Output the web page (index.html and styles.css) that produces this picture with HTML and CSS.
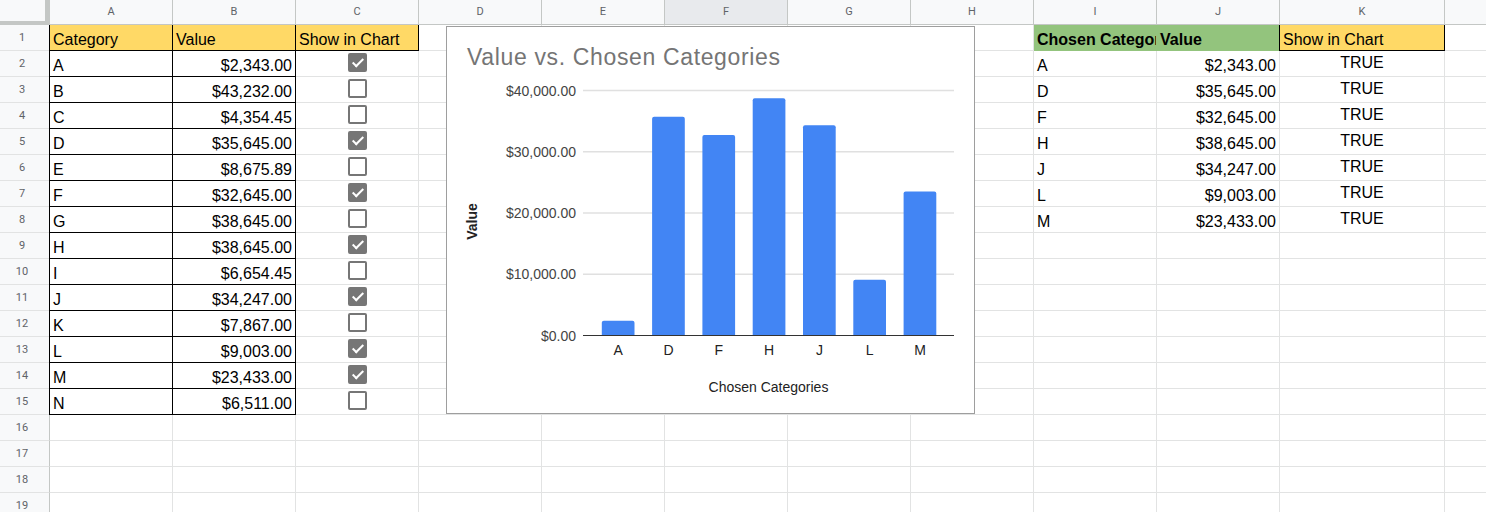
FILE: index.html
```html
<!DOCTYPE html>
<html lang="en">
<head>
    <meta charset="UTF-8">
    <title>Chosen Categories Chart</title>
    <link rel="stylesheet" href="styles.css">
</head>
<body>
    <div class="sheet">
        <div class="corner"></div>
        <div class="col">A</div><div class="col">B</div><div class="col">C</div><div class="col">D</div><div class="col">E</div><div class="col sel">F</div><div class="col">G</div><div class="col">H</div><div class="col">I</div><div class="col">J</div><div class="col">K</div><div class="col"></div>

        <div class="num">1</div>
        <div class="c yel bk bl">Category</div><div class="c yel bk">Value</div><div class="c yel bk">Show in Chart</div>
        <div class="c"></div><div class="c"></div><div class="c"></div><div class="c"></div><div class="c"></div>
        <div class="c grn b">Chosen Categories</div><div class="c grn b">Value</div><div class="c yel bk bl">Show in Chart</div><div class="c"></div>

        <div class="num">2</div>
        <div class="c bk bl">A</div><div class="c bk r">$2,343.00</div><div class="c ctr"><span class="cb on"></span></div>
        <div class="c"></div><div class="c"></div><div class="c"></div><div class="c"></div><div class="c"></div>
        <div class="c">A</div><div class="c r">$2,343.00</div><div class="c ctr t">TRUE</div><div class="c"></div>

        <div class="num">3</div>
        <div class="c bk bl">B</div><div class="c bk r">$43,232.00</div><div class="c ctr"><span class="cb"></span></div>
        <div class="c"></div><div class="c"></div><div class="c"></div><div class="c"></div><div class="c"></div>
        <div class="c">D</div><div class="c r">$35,645.00</div><div class="c ctr t">TRUE</div><div class="c"></div>

        <div class="num">4</div>
        <div class="c bk bl">C</div><div class="c bk r">$4,354.45</div><div class="c ctr"><span class="cb"></span></div>
        <div class="c"></div><div class="c"></div><div class="c"></div><div class="c"></div><div class="c"></div>
        <div class="c">F</div><div class="c r">$32,645.00</div><div class="c ctr t">TRUE</div><div class="c"></div>

        <div class="num">5</div>
        <div class="c bk bl">D</div><div class="c bk r">$35,645.00</div><div class="c ctr"><span class="cb on"></span></div>
        <div class="c"></div><div class="c"></div><div class="c"></div><div class="c"></div><div class="c"></div>
        <div class="c">H</div><div class="c r">$38,645.00</div><div class="c ctr t">TRUE</div><div class="c"></div>

        <div class="num">6</div>
        <div class="c bk bl">E</div><div class="c bk r">$8,675.89</div><div class="c ctr"><span class="cb"></span></div>
        <div class="c"></div><div class="c"></div><div class="c"></div><div class="c"></div><div class="c"></div>
        <div class="c">J</div><div class="c r">$34,247.00</div><div class="c ctr t">TRUE</div><div class="c"></div>

        <div class="num">7</div>
        <div class="c bk bl">F</div><div class="c bk r">$32,645.00</div><div class="c ctr"><span class="cb on"></span></div>
        <div class="c"></div><div class="c"></div><div class="c"></div><div class="c"></div><div class="c"></div>
        <div class="c">L</div><div class="c r">$9,003.00</div><div class="c ctr t">TRUE</div><div class="c"></div>

        <div class="num">8</div>
        <div class="c bk bl">G</div><div class="c bk r">$38,645.00</div><div class="c ctr"><span class="cb"></span></div>
        <div class="c"></div><div class="c"></div><div class="c"></div><div class="c"></div><div class="c"></div>
        <div class="c">M</div><div class="c r">$23,433.00</div><div class="c ctr t">TRUE</div><div class="c"></div>

        <div class="num">9</div>
        <div class="c bk bl">H</div><div class="c bk r">$38,645.00</div><div class="c ctr"><span class="cb on"></span></div>
        <div class="c"></div><div class="c"></div><div class="c"></div><div class="c"></div><div class="c"></div>
        <div class="c"></div><div class="c"></div><div class="c"></div><div class="c"></div>

        <div class="num">10</div>
        <div class="c bk bl">I</div><div class="c bk r">$6,654.45</div><div class="c ctr"><span class="cb"></span></div>
        <div class="c"></div><div class="c"></div><div class="c"></div><div class="c"></div><div class="c"></div>
        <div class="c"></div><div class="c"></div><div class="c"></div><div class="c"></div>

        <div class="num">11</div>
        <div class="c bk bl">J</div><div class="c bk r">$34,247.00</div><div class="c ctr"><span class="cb on"></span></div>
        <div class="c"></div><div class="c"></div><div class="c"></div><div class="c"></div><div class="c"></div>
        <div class="c"></div><div class="c"></div><div class="c"></div><div class="c"></div>

        <div class="num">12</div>
        <div class="c bk bl">K</div><div class="c bk r">$7,867.00</div><div class="c ctr"><span class="cb"></span></div>
        <div class="c"></div><div class="c"></div><div class="c"></div><div class="c"></div><div class="c"></div>
        <div class="c"></div><div class="c"></div><div class="c"></div><div class="c"></div>

        <div class="num">13</div>
        <div class="c bk bl">L</div><div class="c bk r">$9,003.00</div><div class="c ctr"><span class="cb on"></span></div>
        <div class="c"></div><div class="c"></div><div class="c"></div><div class="c"></div><div class="c"></div>
        <div class="c"></div><div class="c"></div><div class="c"></div><div class="c"></div>

        <div class="num">14</div>
        <div class="c bk bl">M</div><div class="c bk r">$23,433.00</div><div class="c ctr"><span class="cb on"></span></div>
        <div class="c"></div><div class="c"></div><div class="c"></div><div class="c"></div><div class="c"></div>
        <div class="c"></div><div class="c"></div><div class="c"></div><div class="c"></div>

        <div class="num">15</div>
        <div class="c bk bl">N</div><div class="c bk r">$6,511.00</div><div class="c ctr"><span class="cb"></span></div>
        <div class="c"></div><div class="c"></div><div class="c"></div><div class="c"></div><div class="c"></div>
        <div class="c"></div><div class="c"></div><div class="c"></div><div class="c"></div>

        <div class="num">16</div>
        <div class="c"></div><div class="c"></div><div class="c"></div><div class="c"></div><div class="c"></div><div class="c"></div>
        <div class="c"></div><div class="c"></div><div class="c"></div><div class="c"></div><div class="c"></div><div class="c"></div>

        <div class="num">17</div>
        <div class="c"></div><div class="c"></div><div class="c"></div><div class="c"></div><div class="c"></div><div class="c"></div>
        <div class="c"></div><div class="c"></div><div class="c"></div><div class="c"></div><div class="c"></div><div class="c"></div>

        <div class="num">18</div>
        <div class="c"></div><div class="c"></div><div class="c"></div><div class="c"></div><div class="c"></div><div class="c"></div>
        <div class="c"></div><div class="c"></div><div class="c"></div><div class="c"></div><div class="c"></div><div class="c"></div>

        <div class="num">19</div>
        <div class="c"></div><div class="c"></div><div class="c"></div><div class="c"></div><div class="c"></div><div class="c"></div>
        <div class="c"></div><div class="c"></div><div class="c"></div><div class="c"></div><div class="c"></div><div class="c"></div>

        <!-- floating chart over D1:H15 -->
        <div class="chart">
            <svg width="527" height="386" viewBox="447 27 527 386">
                <text class="title" x="467" y="65" textLength="313">Value vs. Chosen Categories</text>

                <g class="grid">
                    <line x1="583" y1="90.5" x2="954" y2="90.5"/>
                    <line x1="583" y1="151.75" x2="954" y2="151.75"/>
                    <line x1="583" y1="213" x2="954" y2="213"/>
                    <line x1="583" y1="274.25" x2="954" y2="274.25"/>
                </g>

                <g class="ylab">
                    <text x="576" y="95.5">$40,000.00</text>
                    <text x="576" y="156.75">$30,000.00</text>
                    <text x="576" y="218">$20,000.00</text>
                    <text x="576" y="279.25">$10,000.00</text>
                    <text x="576" y="340.5">$0.00</text>
                </g>

                <g class="bars">
                    <path d="M601.8 335.5V322.65Q601.8 320.65 603.8 320.65H632.5Q634.5 320.65 634.5 322.65V335.5Z"/>
                    <path d="M652.1 335.5V118.7Q652.1 116.7 654.1 116.7H682.8Q684.8 116.7 684.8 118.7V335.5Z"/>
                    <path d="M702.4 335.5V137.05Q702.4 135.05 704.4 135.05H733.1Q735.1 135.05 735.1 137.05V335.5Z"/>
                    <path d="M752.7 335.5V100.3Q752.7 98.3 754.7 98.3H783.4Q785.4 98.3 785.4 100.3V335.5Z"/>
                    <path d="M803 335.5V127.24Q803 125.24 805 125.24H833.7Q835.7 125.24 835.7 127.24V335.5Z"/>
                    <path d="M853.3 335.5V281.86Q853.3 279.86 855.3 279.86H884Q886 279.86 886 281.86V335.5Z"/>
                    <path d="M903.6 335.5V193.47Q903.6 191.47 905.6 191.47H934.3Q936.3 191.47 936.3 193.47V335.5Z"/>
                </g>

                <line class="axis" x1="583" y1="335.5" x2="954" y2="335.5"/>

                <g class="xlab">
                    <text x="618.2" y="355">A</text>
                    <text x="668.5" y="355">D</text>
                    <text x="718.8" y="355">F</text>
                    <text x="769.1" y="355">H</text>
                    <text x="819.4" y="355">J</text>
                    <text x="869.7" y="355">L</text>
                    <text x="920" y="355">M</text>
                </g>

                <text class="xtitle" x="768.5" y="392">Chosen Categories</text>
                <text class="ytitle" transform="translate(477 221.5) rotate(-90)">Value</text>
            </svg>
        </div>
    </div>
</body>
</html>
```

FILE: styles.css
```css
html, body {
    margin: 0;
    height: 100%;
    overflow: hidden;
    background: #fff;
}

.sheet {
    position: relative;
    display: grid;
    grid-template-columns: 50px repeat(10, 123px) 165px 123px;
    grid-template-rows: 25px repeat(19, 26px);
    width: max-content;
    font-family: "Liberation Sans", Arial, sans-serif;
    font-size: 16px;
    color: #000;
}

/* headers */
.corner {
    background: #f8f9fa;
    border-right: 5px solid #c4c7c5;
    border-bottom: 4px solid #c4c7c5;
    box-sizing: border-box;
}

.col {
    display: flex;
    align-items: center;
    justify-content: center;
    padding-bottom: 2px;
    box-sizing: border-box;
    background: #f8f9fa;
    border-right: 1px solid #c4c7c5;
    border-bottom: 1px solid #c4c7c5;
    font-family: Roboto, "Liberation Sans", sans-serif;
    font-size: 11px;
    color: #5f6368;
}

.col.sel {
    background: #e8eaed;
}

.num {
    display: flex;
    align-items: center;
    justify-content: center;
    padding-right: 5px;
    box-sizing: border-box;
    background: #f8f9fa;
    border-right: 1px solid #c4c7c5;
    border-bottom: 1px solid #e2e3e3;
    font-family: Roboto, "Liberation Sans", sans-serif;
    font-size: 11px;
    color: #5f6368;
}

/* cells */
.c {
    display: flex;
    align-items: flex-end;
    padding: 0 3px 1px;
    box-sizing: border-box;
    border-right: 1px solid #e2e3e3;
    border-bottom: 1px solid #e2e3e3;
    line-height: 18px;
    white-space: nowrap;
    overflow: hidden;
    min-width: 0;
}

.c.r { justify-content: flex-end; }
.c.ctr { justify-content: center; }
.c.b { font-weight: bold; }
.c.t { padding-bottom: 4px; }

.c .cb { align-self: center; }

.yel { background: #ffd966; }

.grn {
    background: #93c47d;
    border-right-color: #93c47d;
    border-bottom-color: #93c47d;
}

.bk {
    border-right-color: #000;
    border-bottom-color: #000;
}

.bl {
    box-shadow: -1px 0 0 #000;
}

/* checkboxes */
.cb {
    position: relative;
    display: block;
    width: 19px;
    height: 19px;
    margin-bottom: 1px;
    box-sizing: border-box;
    border: 2px solid #767676;
    border-radius: 2px;
}

.cb.on {
    background: #767676;
}

.cb.on::after {
    content: "";
    position: absolute;
    left: 5px;
    top: 1px;
    width: 6px;
    height: 11px;
    box-sizing: border-box;
    border: solid #fff;
    border-width: 0 2px 2px 0;
    transform: rotate(45deg);
}

/* chart */
.chart {
    position: absolute;
    left: 446px;
    top: 26px;
    width: 529px;
    height: 388px;
    box-sizing: border-box;
    border: 1px solid #9e9e9e;
    background: #fff;
}

.chart svg {
    display: block;
    font-family: "Liberation Sans", Arial, sans-serif;
}

.chart .title {
    font-size: 23px;
    fill: #757575;
}

.chart .grid line {
    stroke: #e0e0e0;
    stroke-width: 1.5;
}

.chart .axis {
    stroke: #333;
    stroke-width: 1;
}

.chart .bars path {
    fill: #4285f4;
}

.chart .ylab text {
    font-size: 14px;
    fill: #444;
    text-anchor: end;
}

.chart .xlab text {
    font-size: 14px;
    fill: #222;
    text-anchor: middle;
}

.chart .xtitle {
    font-size: 14px;
    fill: #222;
    text-anchor: middle;
}

.chart .ytitle {
    font-size: 14px;
    font-weight: bold;
    fill: #222;
    text-anchor: middle;
}
```
